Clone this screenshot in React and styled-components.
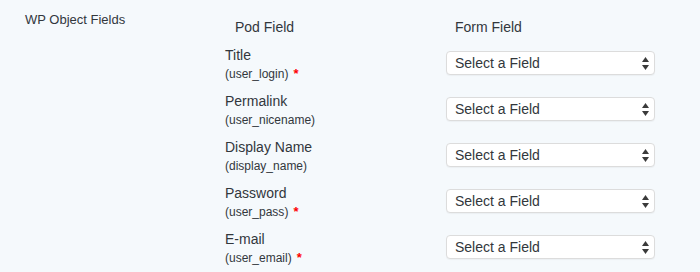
import React from 'react';
import styled, { createGlobalStyle } from 'styled-components';

const GlobalStyle = createGlobalStyle`
  html, body {
    margin: 0;
    padding: 0;
    background: #f5f9fc;
  }
  body {
    font-family: 'Liberation Sans', Arial, sans-serif;
    color: #32373c;
  }
`;

const Page = styled.div`
  display: grid;
  grid-template-columns: 225px 1fr;
  width: 700px;
  height: 272px;
  background: #f5f9fc;
  overflow: hidden;
`;

const SectionLabel = styled.div`
  padding: 11px 0 0 25px;
  font-size: 13px;
  line-height: 18px;
`;

const Table = styled.div`
  display: flex;
  flex-direction: column;
  padding-top: 18px;
`;

const Row = styled.div`
  display: grid;
  grid-template-columns: 221px 209px;
  height: ${(p) => p.$height}px;
`;

const Heading = styled.div`
  padding-left: 10px;
  font-size: 14px;
  line-height: 18px;
  padding-left: ${(p) => p.$indent}px;
`;

const FieldInfo = styled.div`
  display: flex;
  flex-direction: column;
`;

const FieldName = styled.span`
  font-size: 14px;
  line-height: 18px;
`;

const FieldKey = styled.span`
  font-size: 12px;
  line-height: 20px;
`;

const Required = styled.span`
  color: #ff0000;
  font-weight: bold;
  font-size: 13px;
  margin-left: 5px;
`;

const SelectWrap = styled.div`
  position: relative;
  margin-top: 5px;
  height: 24px;
`;

const Select = styled.select`
  appearance: none;
  -webkit-appearance: none;
  width: 100%;
  height: 24px;
  margin: 0;
  padding: 0 24px 0 8px;
  border: 1px solid #dcdcdc;
  border-radius: 4px;
  background: #fff;
  box-shadow: 0 1px 1px rgba(0, 0, 0, 0.04);
  font-family: 'Liberation Sans', Arial, sans-serif;
  font-size: 14px;
  color: #32373c;
  outline: none;
`;

const Arrows = styled.svg`
  position: absolute;
  right: 6px;
  top: 6px;
  pointer-events: none;
`;

const fields = [
  { name: 'Title', key: 'user_login', required: true },
  { name: 'Permalink', key: 'user_nicename' },
  { name: 'Display Name', key: 'display_name' },
  { name: 'Password', key: 'user_pass', required: true },
  { name: 'E-mail', key: 'user_email', required: true },
];

const FieldSelect = () => (
  <SelectWrap>
    <Select defaultValue="">
      <option value="">Select a Field</option>
    </Select>
    <Arrows width="7" height="13" viewBox="0 0 7 13">
      <path d="M3.5 0 L7 5 L0 5 Z" fill="#3a3a3a" />
      <path d="M0 8 L7 8 L3.5 13 Z" fill="#3a3a3a" />
    </Arrows>
  </SelectWrap>
);

export default function App() {
  return (
    <Page>
      <GlobalStyle />
      <SectionLabel>WP Object Fields</SectionLabel>
      <Table>
        <Row $height={28}>
          <Heading $indent={10}>Pod Field</Heading>
          <Heading $indent={9}>Form Field</Heading>
        </Row>
        {fields.map((f) => (
          <Row key={f.key} $height={46}>
            <FieldInfo>
              <FieldName>{f.name}</FieldName>
              <FieldKey>
                ({f.key})
                {f.required && <Required>*</Required>}
              </FieldKey>
            </FieldInfo>
            <FieldSelect />
          </Row>
        ))}
      </Table>
    </Page>
  );
}
